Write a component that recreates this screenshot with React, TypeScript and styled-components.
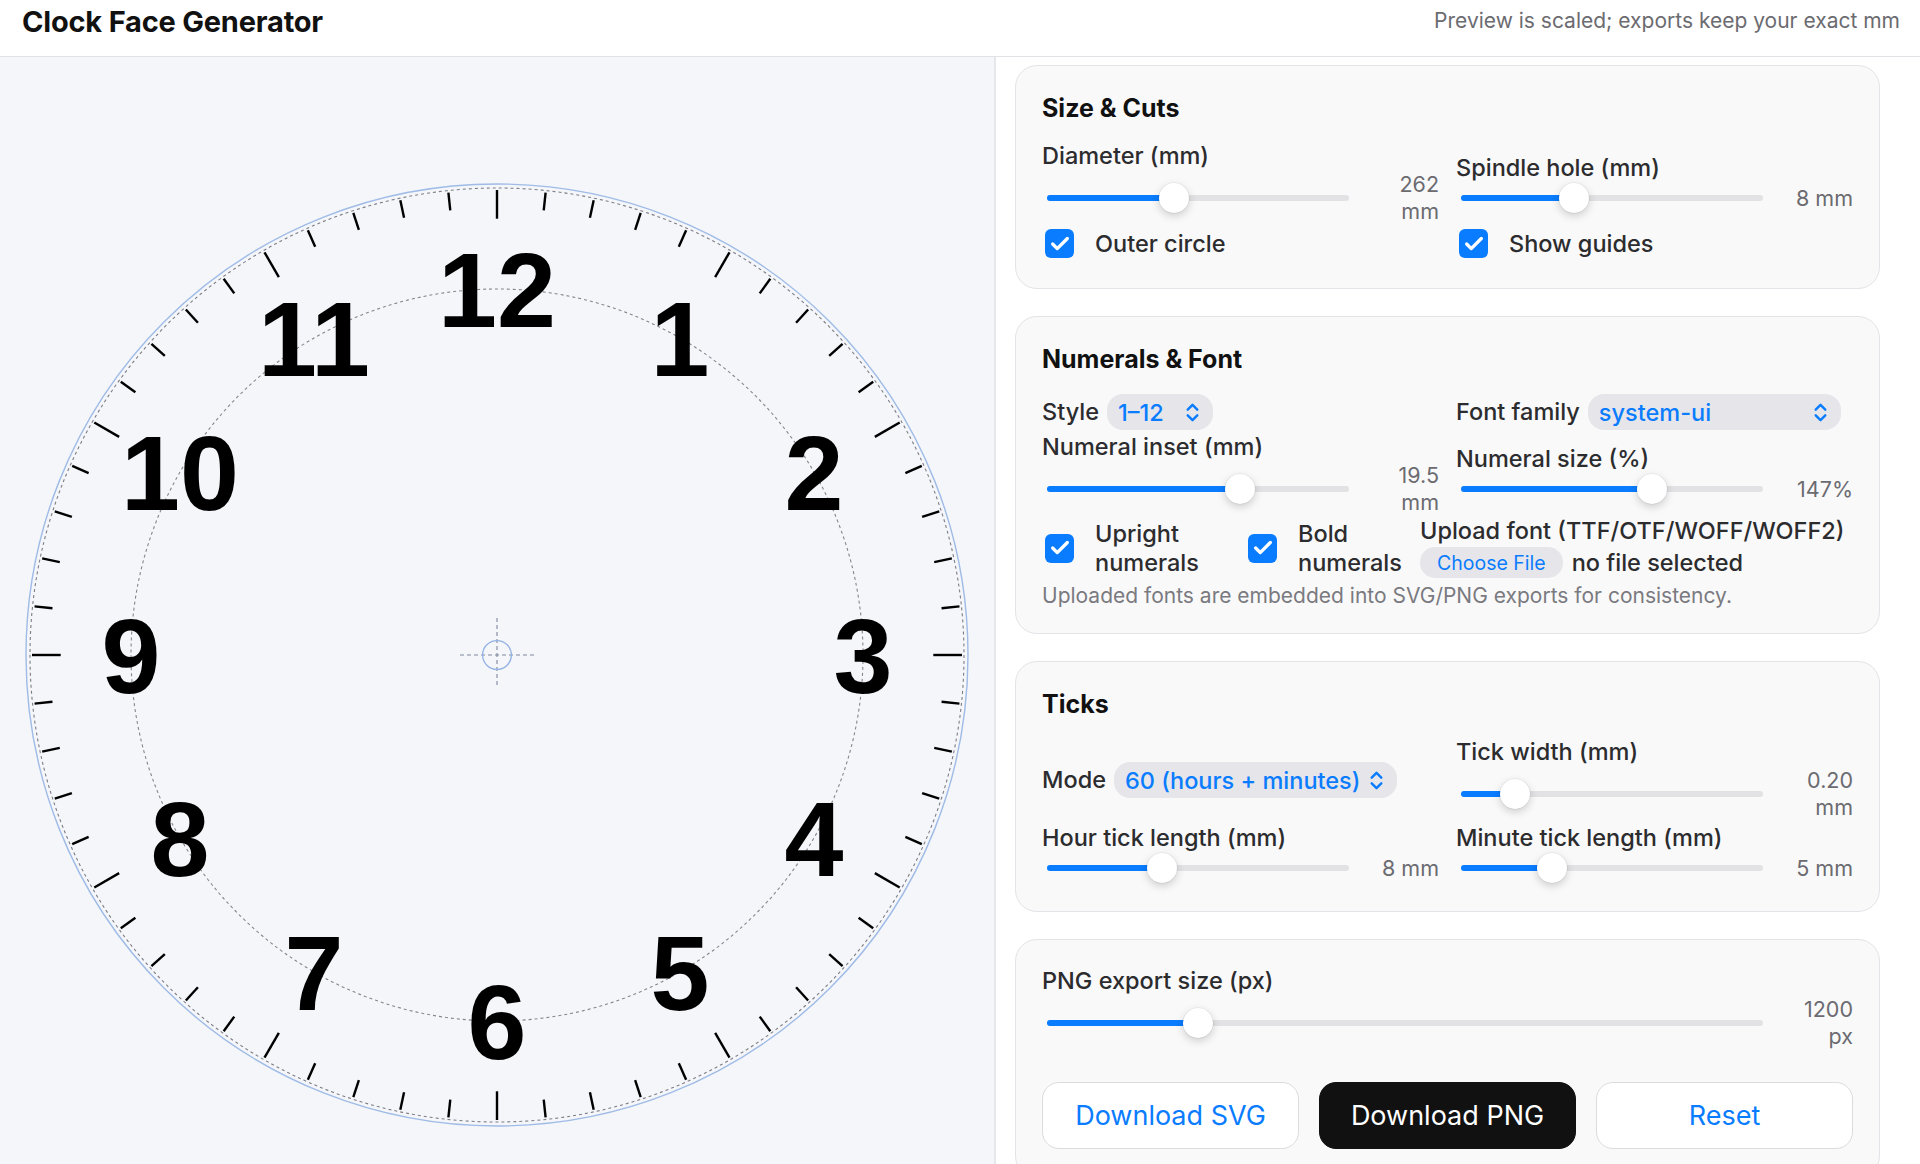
import React from 'react';
import styled, { createGlobalStyle } from 'styled-components';
import { Check, ChevronsUpDown } from 'lucide-react';

const GlobalStyle = createGlobalStyle`
  * { box-sizing: border-box; }
  body {
    margin: 0;
    font-family: Inter, "Noto Sans", sans-serif;
    color: #1d1d1f;
    background: #fff;
  }
`;

const BLUE = '#0a7cff';

const Page = styled.div`
  display: flex;
  flex-direction: column;
`;

const Header = styled.header`
  height: 57px;
  display: flex;
  align-items: center;
  justify-content: space-between;
  padding: 0 20px 14px 22px;
  border-bottom: 1px solid #e2e2e6;
  background: #fff;
`;

const AppTitle = styled.h1`
  margin: 0;
  font-size: 29px;
  line-height: 35px;
  font-weight: 700;
  color: #111;
  letter-spacing: -0.2px;
`;

const HeaderNote = styled.span`
  font-size: 21px;
  line-height: 28px;
  color: #6b6b70;
`;

const Main = styled.main`
  display: grid;
  grid-template-columns: 996px 1fr;
`;

const PreviewPane = styled.div`
  background: #f4f6fa;
  border-right: 2px solid #e6e7eb;
  display: flex;
  justify-content: center;
  align-items: flex-start;
  padding-top: 118px;
`;

const ControlsPane = styled.div`
  display: flex;
  flex-direction: column;
  gap: 27px;
  padding: 8px 40px 40px 19px;
`;

const Card = styled.section<{ $top?: number; $bottom?: number }>`
  background: #f9f9fa;
  border: 1.5px solid #e4e4e8;
  border-radius: 22px;
  padding: ${(p) => p.$top ?? 27}px 26px ${(p) => p.$bottom ?? 28}px;
  display: flex;
  flex-direction: column;
`;

const CardTitle = styled.h2`
  margin: 0 0 19px;
  font-size: 25px;
  line-height: 31px;
  font-weight: 700;
  color: #111;
`;

const Grid2 = styled.div`
  display: grid;
  grid-template-columns: 1fr 1fr;
  column-gap: 17px;
  row-gap: 4px;
  align-items: center;
`;

const Field = styled.div`
  display: flex;
  flex-direction: column;
  gap: 2px;
`;

const Label = styled.div`
  font-size: 23.5px;
  line-height: 26px;
  font-weight: 500;
  color: #2c2c2e;
`;

const SliderRow = styled.div`
  display: flex;
  align-items: center;
  gap: 28px;
  padding-left: 5px;
  min-height: 30px;
`;

const Track = styled.div`
  position: relative;
  flex: 1;
  height: 6px;
  border-radius: 3px;
  background: #e2e2e5;
`;

const Fill = styled.div`
  height: 100%;
  border-radius: 3px;
  background: ${BLUE};
`;

const Thumb = styled.div`
  position: absolute;
  top: 50%;
  width: 30px;
  height: 30px;
  border-radius: 50%;
  background: #fff;
  transform: translate(-50%, -50%);
  box-shadow: 0 3px 8px rgba(0, 0, 0, 0.18), 0 0 0 0.5px rgba(0, 0, 0, 0.08);
`;

const Value = styled.div`
  width: 62px;
  text-align: right;
  font-size: 21.5px;
  line-height: 27px;
  color: #6b6b70;
`;

const Slider = ({ pct, value }: { pct: number; value: string }) => (
  <SliderRow>
    <Track>
      <Fill style={{ width: `${pct}%` }} />
      <Thumb style={{ left: `${pct}%` }} />
    </Track>
    <Value>{value}</Value>
  </SliderRow>
);

const RangeField = ({ label, pct, value }: { label: string; pct: number; value: string }) => (
  <Field>
    <Label>{label}</Label>
    <Slider pct={pct} value={value} />
  </Field>
);

const CheckItem = styled.label`
  display: flex;
  align-items: center;
  gap: 21px;
  font-size: 23.5px;
  line-height: 29px;
  font-weight: 500;
  color: #2c2c2e;
`;

const Box = styled.span`
  flex: none;
  width: 29px;
  height: 29px;
  margin-left: 3px;
  border-radius: 6px;
  background: ${BLUE};
  display: flex;
  align-items: center;
  justify-content: center;
  color: #fff;
`;

const Checkbox = ({ children }: { children: React.ReactNode }) => (
  <CheckItem>
    <Box>
      <Check size={22} strokeWidth={3.6} />
    </Box>
    <span>{children}</span>
  </CheckItem>
);

const InlineField = styled.div`
  display: flex;
  align-items: center;
  gap: 8px;
`;

const Select = styled.div<{ $width: number }>`
  width: ${(p) => p.$width}px;
  height: 36px;
  display: flex;
  align-items: center;
  justify-content: space-between;
  padding: 0 9px 0 11px;
  border-radius: 16px;
  background: #e6e6ea;
  color: ${BLUE};
  font-size: 23.5px;
  font-weight: 500;
`;

const SelectField = ({ label, value, width }: { label: string; value: string; width: number }) => (
  <InlineField>
    <Label>{label}</Label>
    <Select $width={width}>
      <span>{value}</span>
      <ChevronsUpDown size={23} strokeWidth={2.5} />
    </Select>
  </InlineField>
);

const OptionsRow = styled.div`
  display: grid;
  grid-template-columns: 186px 158px auto;
  column-gap: 17px;
  align-items: center;
  margin-top: 2px;
`;

const Upload = styled.div`
  display: flex;
  flex-direction: column;
  gap: 3px;
  white-space: nowrap;
`;

const FileRow = styled.div`
  display: flex;
  align-items: center;
  gap: 9px;
`;

const FileButton = styled.span`
  height: 31px;
  display: flex;
  align-items: center;
  padding: 0 17px;
  border-radius: 15px;
  background: #e6e6ea;
  color: ${BLUE};
  font-size: 19.5px;
`;

const Hint = styled.p`
  margin: 5px 0 0;
  font-size: 21px;
  line-height: 26px;
  color: #7a7a80;
`;

const Actions = styled.div`
  display: grid;
  grid-template-columns: repeat(3, 1fr);
  gap: 20px;
  margin-top: 32px;
`;

const Button = styled.button<{ $primary?: boolean }>`
  height: 67px;
  border-radius: 17px;
  border: 1.5px solid ${(p) => (p.$primary ? '#111' : '#dcdce0')};
  background: ${(p) => (p.$primary ? '#111' : '#fff')};
  color: ${(p) => (p.$primary ? '#fff' : BLUE)};
  font-family: inherit;
  font-size: 27px;
  font-weight: 400;
`;

/* clock preview */
const CX = 480;
const CY = 480;
const R_OUTER = 471;
const R_GUIDE = 467;
const HOUR_LEN = 28.7;
const MIN_LEN = 18;
const NUM_R = 366;

const ClockFace = () => {
  const ticks = Array.from({ length: 60 }, (_, i) => {
    const a = (i * 6 * Math.PI) / 180;
    const len = i % 5 === 0 ? HOUR_LEN : MIN_LEN;
    const r1 = R_GUIDE - 2;
    const r2 = r1 - len;
    return (
      <line
        key={i}
        x1={CX + r1 * Math.sin(a)}
        y1={CY - r1 * Math.cos(a)}
        x2={CX + r2 * Math.sin(a)}
        y2={CY - r2 * Math.cos(a)}
        stroke="#000"
        strokeWidth={2.4}
      />
    );
  });
  const numerals = Array.from({ length: 12 }, (_, k) => {
    const n = k + 1;
    const a = (n * 30 * Math.PI) / 180;
    return (
      <text
        key={n}
        x={CX + NUM_R * Math.sin(a)}
        y={CY - NUM_R * Math.cos(a) + 38}
        textAnchor="middle"
        fontFamily='"Liberation Sans", Arial, sans-serif'
        fontWeight={700}
        fontSize={106}
        fill="#000"
      >
        {n}
      </text>
    );
  });
  return (
    <svg width={960} height={960} viewBox="0 0 960 960">
      <circle cx={CX} cy={CY} r={R_OUTER} fill="none" stroke="#9fbbe6" strokeWidth={1.4} />
      <circle cx={CX} cy={CY} r={R_GUIDE} fill="none" stroke="#7d7d84" strokeWidth={1.1} strokeDasharray="3 3" />
      <circle cx={CX} cy={CY} r={NUM_R} fill="none" stroke="#86868c" strokeWidth={1.1} strokeDasharray="3 3" />
      {ticks}
      {numerals}
      <line x1={CX - 37} y1={CY} x2={CX + 37} y2={CY} stroke="#7f889c" strokeWidth={1.1} strokeDasharray="4 3" />
      <line x1={CX} y1={CY - 37} x2={CX} y2={CY + 33} stroke="#7f889c" strokeWidth={1.1} strokeDasharray="4 3" />
      <circle cx={CX} cy={CY} r={14.4} fill="none" stroke="#94b2e4" strokeWidth={1.3} />
    </svg>
  );
};

const App = () => (
  <Page>
    <GlobalStyle />
    <Header>
      <AppTitle>Clock Face Generator</AppTitle>
      <HeaderNote>Preview is scaled; exports keep your exact mm</HeaderNote>
    </Header>
    <Main>
      <PreviewPane>
        <ClockFace />
      </PreviewPane>
      <ControlsPane>
        <Card $bottom={30}>
          <CardTitle>Size &amp; Cuts</CardTitle>
          <Grid2>
            <RangeField label="Diameter (mm)" pct={41.9} value="262 mm" />
            <RangeField label="Spindle hole (mm)" pct={37.5} value="8 mm" />
            <Checkbox>Outer circle</Checkbox>
            <Checkbox>Show guides</Checkbox>
          </Grid2>
        </Card>

        <Card $bottom={24}>
          <CardTitle>Numerals &amp; Font</CardTitle>
          <Grid2>
            <SelectField label="Style" value="1–12" width={106} />
            <SelectField label="Font family" value="system-ui" width={253} />
            <RangeField label="Numeral inset (mm)" pct={64} value="19.5 mm" />
            <RangeField label="Numeral size (%)" pct={63.2} value="147%" />
          </Grid2>
          <OptionsRow>
            <Checkbox>Upright numerals</Checkbox>
            <Checkbox>Bold numerals</Checkbox>
            <Upload>
              <Label>Upload font (TTF/OTF/WOFF/WOFF2)</Label>
              <FileRow>
                <FileButton>Choose File</FileButton>
                <Label>no file selected</Label>
              </FileRow>
            </Upload>
          </OptionsRow>
          <Hint>Uploaded fonts are embedded into SVG/PNG exports for consistency.</Hint>
        </Card>

        <Card>
          <CardTitle>Ticks</CardTitle>
          <Grid2>
            <SelectField label="Mode" value="60 (hours + minutes)" width={283} />
            <RangeField label="Tick width (mm)" pct={18} value="0.20 mm" />
            <RangeField label="Hour tick length (mm)" pct={38} value="8 mm" />
            <RangeField label="Minute tick length (mm)" pct={30} value="5 mm" />
          </Grid2>
        </Card>

        <Card $top={28}>
          <RangeField label="PNG export size (px)" pct={21.1} value="1200 px" />
          <Actions>
            <Button>Download SVG</Button>
            <Button $primary>Download PNG</Button>
            <Button>Reset</Button>
          </Actions>
        </Card>
      </ControlsPane>
    </Main>
  </Page>
);

export default App;
